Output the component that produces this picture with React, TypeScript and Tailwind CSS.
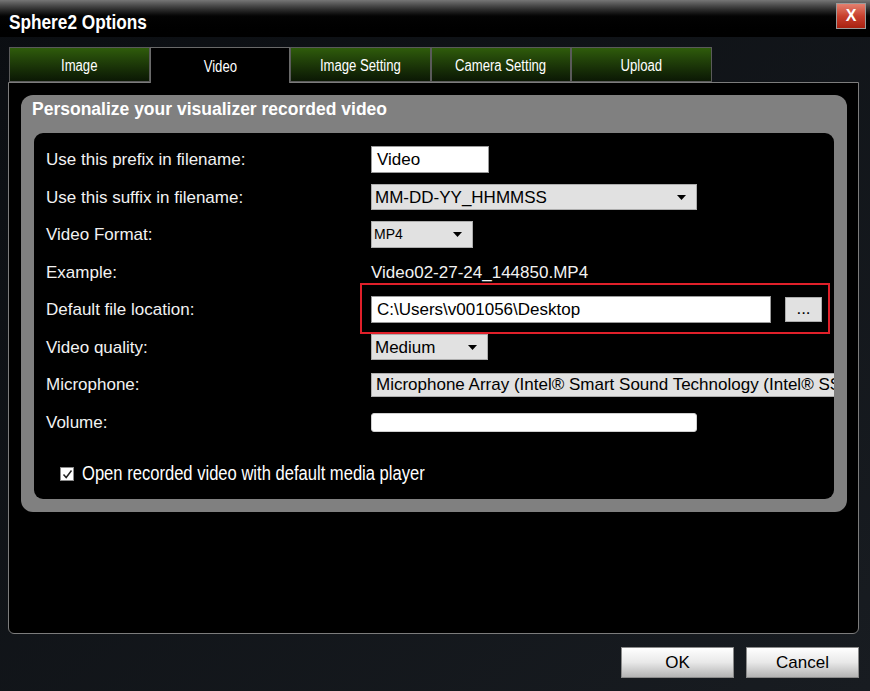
import React from "react";

const Arrow = () => (
  <svg width="9" height="5" viewBox="0 0 9 5" className="shrink-0">
    <path d="M0 0 L9 0 L4.5 5 Z" fill="#000" />
  </svg>
);

const tabs = ["Image", "Video", "Image Setting", "Camera Setting", "Upload"];

export default function App() {
  return (
    <div
      className="w-[870px] h-[691px] flex flex-col overflow-hidden bg-gradient-to-br from-[#0b0e12] to-[#181c21] text-white"
      style={{ fontFamily: '"Liberation Sans", Arial, sans-serif' }}
    >
      {/* Title bar */}
      <div className="h-[37px] shrink-0 flex items-start justify-between bg-gradient-to-b from-[#767676] via-[#030303] via-45% to-black">
        <div className="pl-[9px] pt-[10px] text-[21px] leading-[24px] font-bold text-white">
          <span className="inline-block origin-left scale-x-[0.82] whitespace-nowrap">Sphere2 Options</span>
        </div>
        <div className="mt-[3px] mr-[4px] w-[30px] h-[26px] border border-[#9a9a9a] bg-gradient-to-b from-[#e4806f] via-[#c8402e] to-[#a8200f] flex items-center justify-center text-white font-bold text-[16px] leading-none">
          X
        </div>
      </div>

      {/* Tabs */}
      <div className="mt-[10px] ml-[9px] flex h-[35px] shrink-0 relative z-10">
        {tabs.map((t) => {
          const active = t === "Video";
          return (
            <div
              key={t}
              className={
                active
                  ? "w-[140.6px] h-[36px] border border-[#6a6a6a] border-b-0 bg-black flex items-center justify-center text-[16px] text-white"
                  : "w-[140.6px] h-[35px] border border-[#5a5a5a] bg-gradient-to-b from-[#2f5c0b] to-[#0b1804] flex items-center justify-center text-[16px] text-white"
              }
            >
              <span className="inline-block scale-x-[0.82] whitespace-nowrap pt-[2px]">{t}</span>
            </div>
          );
        })}
      </div>

      {/* Frame */}
      <div className="ml-[8px] mr-[11px] h-[552px] shrink-0 border border-[#7c7c7c] rounded-b-[6px] bg-black pt-[12px] pl-[12px]">
        <div className="w-[826px] h-[417px] rounded-[12px] bg-[#808080] flex flex-col">
          <div className="h-[38px] pl-[11px] pb-[9px] flex items-center text-[17.5px] font-bold text-white">
            Personalize your visualizer recorded video
          </div>
          <div className="mx-[13px] h-[366px] rounded-[9px] bg-black pl-[12px] pt-[8px] overflow-hidden text-[17px] text-[#f2f2f2]">
            {/* prefix */}
            <div className="h-[37.5px] flex items-center">
              <div className="w-[325px]">Use this prefix in filename:</div>
              <div className="w-[118px] h-[27px] bg-white border border-[#9a9a9a] text-black flex items-center pl-[5px]">
                Video
              </div>
            </div>
            {/* suffix */}
            <div className="h-[37.5px] flex items-center">
              <div className="w-[325px]">Use this suffix in filename:</div>
              <div className="w-[326px] h-[26px] bg-[#e1e1e1] border border-[#adadad] text-black flex items-center justify-between pl-[3px] pr-[10px]">
                <span>MM-DD-YY_HHMMSS</span>
                <Arrow />
              </div>
            </div>
            {/* format */}
            <div className="h-[37.5px] flex items-center">
              <div className="w-[325px]">Video Format:</div>
              <div className="w-[102px] h-[27px] bg-[#e1e1e1] border border-[#adadad] text-black flex items-center justify-between pl-[2px] pr-[10px] text-[14px]">
                <span>MP4</span>
                <Arrow />
              </div>
            </div>
            {/* example */}
            <div className="h-[37.5px] flex items-center">
              <div className="w-[325px]">Example:</div>
              <div>Video02-27-24_144850.MP4</div>
            </div>
            {/* location */}
            <div className="h-[37.5px] flex items-center relative">
              <div className="w-[325px]">Default file location:</div>
              <div className="w-[400px] h-[27px] bg-white border border-[#9a9a9a] text-black flex items-center pl-[5px]">
                C:\Users\v001056\Desktop
              </div>
              <div className="ml-[14px] w-[37px] h-[25px] bg-[#e1e1e1] border border-[#adadad] text-black flex items-center justify-center leading-none pb-[2px]">
                ...
              </div>
              <div className="absolute left-[314px] top-[-8px] w-[470px] h-[51px] border-2 border-[#e0202a] pointer-events-none" />
            </div>
            {/* quality */}
            <div className="h-[37.5px] flex items-center">
              <div className="w-[325px]">Video quality:</div>
              <div className="w-[117px] h-[26px] bg-[#e1e1e1] border border-[#adadad] text-black flex items-center justify-between pl-[3px] pr-[10px]">
                <span>Medium</span>
                <Arrow />
              </div>
            </div>
            {/* microphone */}
            <div className="h-[37.5px] flex items-center">
              <div className="w-[325px] shrink-0">Microphone:</div>
              <div className="w-[520px] shrink-0 h-[24px] bg-[#e1e1e1] border border-[#adadad] text-black flex items-center pl-[4px] whitespace-nowrap overflow-hidden">
                Microphone Array (Intel® Smart Sound Technology (Intel® SST)
              </div>
            </div>
            {/* volume */}
            <div className="h-[37.5px] flex items-center">
              <div className="w-[325px]">Volume:</div>
              <div className="w-[326px] h-[19px] bg-white rounded-[3px] border border-[#cfcfcf]" />
            </div>
            {/* checkbox */}
            <div className="mt-[14px] h-[38px] flex items-center pl-[14px]">
              <div className="w-[14px] h-[14px] bg-white border border-[#8a8a8a] flex items-center justify-center">
                <svg width="11" height="11" viewBox="0 0 11 11">
                  <path d="M1.5 5.5 L4.2 8.5 L9.5 1.5" stroke="#222" strokeWidth="1.5" fill="none" />
                </svg>
              </div>
              <div className="ml-[8px] text-[19.5px] text-white">
                <span className="inline-block origin-left scale-x-[0.85] whitespace-nowrap">
                  Open recorded video with default media player
                </span>
              </div>
            </div>
          </div>
        </div>
      </div>

      {/* Footer */}
      <div className="flex justify-end gap-[12px] pt-[13px] pr-[11px]">
        <div className="w-[113px] h-[31px] bg-gradient-to-b from-white via-[#e8e8e8] to-[#b4b4b4] border border-[#8a8a8a] flex items-center justify-center text-black text-[17px]">
          OK
        </div>
        <div className="w-[113px] h-[31px] bg-gradient-to-b from-white via-[#e8e8e8] to-[#b4b4b4] border border-[#8a8a8a] flex items-center justify-center text-black text-[17px]">
          Cancel
        </div>
      </div>
    </div>
  );
}
